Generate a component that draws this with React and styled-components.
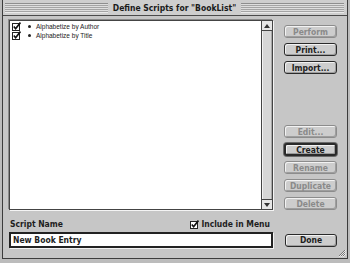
import React from 'react';
import styled, { createGlobalStyle } from 'styled-components';

const GlobalStyle = createGlobalStyle`
  html, body {
    margin: 0;
    padding: 0;
    background: #bcbcbc;
  }
  body {
    width: 350px;
    height: 263px;
    overflow: hidden;
    font-family: "DejaVu Sans Condensed", "DejaVu Sans", sans-serif;
    color: #1e1e1e;
  }
`;

const scripts = ['Alphabetize by Author', 'Alphabetize by Title'];

const CheckMark = ({ size = 9 }) => (
  <svg width={size} height={size} viewBox="0 0 9 9">
    <rect x="0.5" y="1.5" width="7" height="7" fill="#fff" stroke="#222" />
    <path d="M1.8 4.6 L3.6 6.8 L8.4 0.6" fill="none" stroke="#111" strokeWidth="1.6" />
  </svg>
);

const ScriptList = () => (
  <ListBox>
    <Items>
      {scripts.map((s) => (
        <Item key={s}>
          <CheckMark />
          <Bullet />
          <ItemText>{s}</ItemText>
        </Item>
      ))}
    </Items>
    <ScrollBar>
      <Arrow>
        <svg width="6" height="4" viewBox="0 0 6 4"><path d="M0 4 L3 0 L6 4 Z" fill="#333" /></svg>
      </Arrow>
      <Track />
      <Arrow $bottom>
        <svg width="6" height="4" viewBox="0 0 6 4"><path d="M0 0 L3 4 L6 0 Z" fill="#333" /></svg>
      </Arrow>
    </ScrollBar>
  </ListBox>
);

export default function App() {
  return (
    <>
      <GlobalStyle />
      <Frame>
        <TitleBar>
          <Stripes>
            <Title>Define Scripts for "BookList"</Title>
          </Stripes>
        </TitleBar>
        <Body>
          <ScriptList />
          <ButtonColumn>
            <ButtonGroup>
              <Button disabled>Perform</Button>
              <Button>Print...</Button>
              <Button>Import...</Button>
            </ButtonGroup>
            <ButtonGroup>
              <Button disabled>Edit...</Button>
              <Button $default>Create</Button>
              <Button disabled>Rename</Button>
              <Button disabled>Duplicate</Button>
              <Button disabled>Delete</Button>
            </ButtonGroup>
          </ButtonColumn>
          <LabelRow>
            <Label>Script Name</Label>
            <CheckLabel>
              <CheckMark />
              Include in Menu
            </CheckLabel>
          </LabelRow>
          <Spacer />
          <NameField>New Book Entry</NameField>
          <DoneCell>
            <Button>Done</Button>
          </DoneCell>
        </Body>
        <Grip>
          <svg width="9" height="9" viewBox="0 0 9 9">
            <path d="M8 2 L2 8 M8 4 L4 8 M8 6 L6 8" stroke="#777" strokeWidth="1" />
            <path d="M9 2 L2 9 M9 4 L4 9 M9 6 L6 9" stroke="#f2f2f2" strokeWidth="0.8" />
          </svg>
        </Grip>
      </Frame>
    </>
  );
}

const Frame = styled.div`
  position: relative;
  box-sizing: border-box;
  margin-left: 2px;
  width: 346px;
  height: 259px;
  background: #c6c6c6;
  border: 1px solid #3c3c3c;
  border-top: none;
  display: flex;
  flex-direction: column;
`;

const TitleBar = styled.div`
  height: 16px;
  padding: 3px 3px 3px 2px;
  box-sizing: border-box;
  border-bottom: 1px solid #4a4a4a;
  background: #cecece;
`;

const Stripes = styled.div`
  height: 10px;
  display: flex;
  justify-content: center;
  align-items: center;
  border-top: 1px solid #8e8e8e;
  border-bottom: 1px solid #eaeaea;
  box-sizing: border-box;
  background: repeating-linear-gradient(
    to bottom,
    #dedede 0px,
    #dedede 1px,
    #a4a4a4 1px,
    #a4a4a4 2px
  );
`;

const Title = styled.span`
  background: #cecece;
  padding: 0 5px;
  font-size: 8.5px;
  font-weight: bold;
  line-height: 12px;
  color: #1a1a1a;
`;

const Body = styled.div`
  display: grid;
  grid-template-columns: 264px 53px;
  grid-template-rows: 190px 22px 16px;
  column-gap: 11px;
  padding: 4px 0 0 6px;
`;

const ListBox = styled.div`
  box-sizing: border-box;
  display: flex;
  background: #fff;
  border: 1px solid #444;
  box-shadow: -1px -1px 0 #8a8a8a, 1px 1px 0 #f4f4f4;
`;

const Items = styled.div`
  flex: 1;
  padding: 1px 0 0 2px;
`;

const Item = styled.div`
  height: 9px;
  display: flex;
  align-items: center;
`;

const Bullet = styled.span`
  width: 3px;
  height: 3px;
  border-radius: 50%;
  background: #222;
  margin: 0 5px 0 7px;
`;

const ItemText = styled.span`
  font-family: "Liberation Sans", Arial, sans-serif;
  font-size: 6.5px;
  line-height: 9px;
  color: #222;
`;

const ScrollBar = styled.div`
  width: 10px;
  border-left: 1px solid #444;
  display: flex;
  flex-direction: column;
  background: #dedede;
`;

const Arrow = styled.div`
  height: 10px;
  box-sizing: border-box;
  display: flex;
  align-items: center;
  justify-content: center;
  background: #e6e6e6;
  ${(p) => (p.$bottom ? 'border-top: 1px solid #444;' : 'border-bottom: 1px solid #444;')}
`;

const Track = styled.div`
  flex: 1;
  background: #d6d6d6;
  box-shadow: inset 1px 0 0 #f2f2f2, inset -1px 0 0 #a8a8a8;
`;

const ButtonColumn = styled.div`
  display: flex;
  flex-direction: column;
  justify-content: space-between;
  padding-top: 5px;
`;

const ButtonGroup = styled.div`
  display: flex;
  flex-direction: column;
  gap: 5px;
`;

const Button = styled.button`
  box-sizing: border-box;
  width: 53px;
  height: 13px;
  padding: 0;
  margin: 0;
  border: ${(p) => (p.$default ? '2px solid #1e1e1e' : '1px solid')};
  border-color: ${(p) => (p.disabled ? '#8c8c8c' : '#2a2a2a')};
  border-radius: 3px;
  background: #cdcdcd;
  box-shadow: ${(p) =>
    p.$default
      ? '0 0 0 1px #6a6a6a, inset 1px 1px 0 #f2f2f2, inset -1px -1px 0 #9a9a9a'
      : 'inset 1px 1px 0 #f2f2f2, inset -1px -1px 0 #9e9e9e'};
  font-family: "DejaVu Sans Condensed", "DejaVu Sans", sans-serif;
  font-size: 8.5px;
  font-weight: bold;
  line-height: 10px;
  color: ${(p) => (p.disabled ? '#8a8a8a' : '#1e1e1e')};
`;

const LabelRow = styled.div`
  display: flex;
  justify-content: space-between;
  align-items: flex-end;
  padding: 0 3px 2px 1px;
`;

const Label = styled.span`
  font-size: 8.5px;
  font-weight: bold;
  line-height: 11px;
`;

const CheckLabel = styled.label`
  display: flex;
  align-items: center;
  gap: 2px;
  font-size: 8.5px;
  font-weight: bold;
  line-height: 11px;
`;

const Spacer = styled.div``;

const NameField = styled.div`
  box-sizing: border-box;
  background: #fff;
  border: 2px solid #222;
  box-shadow: 1px 1px 0 #f2f2f2;
  padding-left: 2px;
  font-size: 8.5px;
  font-weight: bold;
  line-height: 12px;
`;

const DoneCell = styled.div`
  display: flex;
  align-items: center;
  padding-left: 1px;
`;

const Grip = styled.div`
  position: absolute;
  right: 1px;
  bottom: 1px;
  line-height: 0;
`;
